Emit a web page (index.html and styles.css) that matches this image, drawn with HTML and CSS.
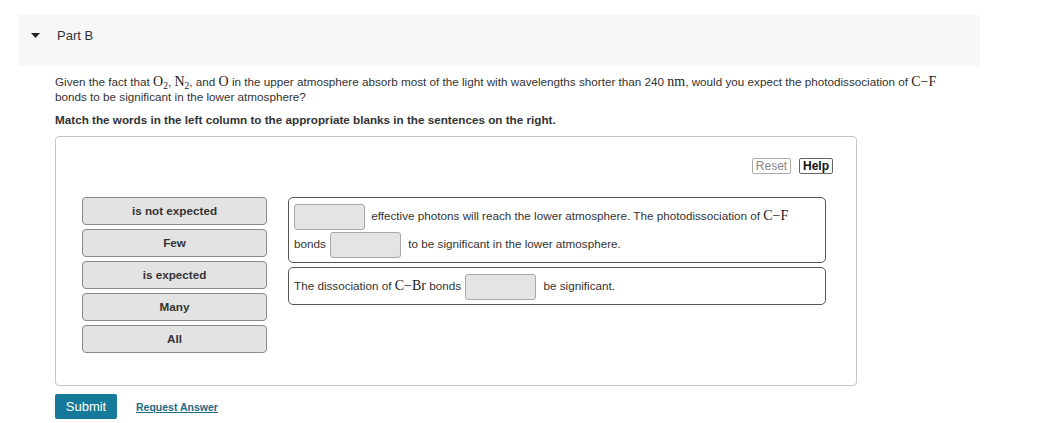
FILE: index.html
```html
<!DOCTYPE html>
<html lang="en">
<head>
<meta charset="utf-8">
<title>Part B</title>
<link rel="stylesheet" href="styles.css">
</head>
<body>
<div class="part-header">
  <svg class="caret" width="9" height="5" viewBox="0 0 9 5"><path d="M0 0 H9 L4.5 5 Z" fill="#222"/></svg>
  <span class="part-title">Part B</span>
</div>
<div class="content">
  <p class="question">Given the fact that <span class="m">O<sub>2</sub></span>, <span class="m">N<sub>2</sub></span>, and <span class="m">O</span> in the upper atmosphere absorb most of the light with wavelengths shorter than 240 <span class="m">nm</span>, would you expect the photodissociation of <span class="m">C−F</span> bonds to be significant in the lower atmosphere?</p>
  <p class="instructions">Match the words in the left column to the appropriate blanks in the sentences on the right.</p>
  <div class="match-box">
    <div class="toolbar">
      <button class="tool-btn reset">Reset</button>
      <button class="tool-btn help">Help</button>
    </div>
    <div class="match-area">
      <div class="word-col">
        <div class="word">is not expected</div>
        <div class="word">Few</div>
        <div class="word">is expected</div>
        <div class="word">Many</div>
        <div class="word">All</div>
      </div>
      <div class="sentence-col">
        <div class="sentence"><span class="blank first"></span> effective photons will reach the lower atmosphere. The photodissociation of <span class="m">C−F</span><br>bonds <span class="blank"></span> to be significant in the lower atmosphere.</div>
        <div class="sentence">The dissociation of <span class="m">C−Br</span> bonds <span class="blank"></span> be significant.</div>
      </div>
    </div>
  </div>
  <div class="actions">
    <button class="submit">Submit</button>
    <a class="request" href="#">Request Answer</a>
  </div>
</div>
</body>
</html>
```

FILE: styles.css
```css
body {
  margin: 0;
  font-family: "Liberation Sans", Arial, sans-serif;
  color: #333;
  background: #fff;
}

.part-header {
  box-sizing: border-box;
  margin: 15px 0 0 18px;
  width: 962px;
  height: 51px;
  background: #f7f7f7;
  display: flex;
  align-items: flex-start;
  padding: 12px 0 0 13px;
}

.caret {
  margin-top: 6px;
  margin-right: 17px;
}

.part-title {
  font-size: 13px;
  line-height: 17px;
  color: #333;
}

.content {
  margin-left: 55px;
}

.question {
  width: 905px;
  margin: 8px 0 0;
  font-size: 11.7px;
  line-height: 15px;
}

.m {
  font-family: "Liberation Serif", "Times New Roman", serif;
  font-size: 14px;
  line-height: 0;
  color: #222;
}

.m sub {
  font-size: 9.5px;
  line-height: 0;
  vertical-align: -3px;
}

.instructions {
  margin: 8px 0 0;
  font-size: 11.7px;
  line-height: 15px;
  font-weight: bold;
}

.match-box {
  box-sizing: border-box;
  width: 802px;
  margin-top: 9px;
  border: 1px solid #c6c6c6;
  border-radius: 4px;
  padding: 21px 23px 32px 26px;
}

.toolbar {
  display: flex;
  justify-content: flex-end;
  gap: 8px;
  height: 16px;
  margin-bottom: 23px;
}

.tool-btn {
  box-sizing: border-box;
  height: 16px;
  padding: 0 2px;
  font-family: "Liberation Sans", Arial, sans-serif;
  font-size: 12px;
  line-height: 14px;
  background: #fff;
  border-radius: 2px;
  cursor: pointer;
}

.reset {
  width: 39px;
  color: #888;
  border: 1px solid #aaa;
}

.help {
  width: 34px;
  color: #111;
  font-weight: bold;
  border: 1px solid #666;
}

.match-area {
  display: flex;
  gap: 21px;
  align-items: flex-start;
}

.word-col {
  width: 185px;
  display: flex;
  flex-direction: column;
  gap: 4px;
}

.word {
  box-sizing: border-box;
  height: 28px;
  line-height: 26px;
  text-align: center;
  font-size: 11.7px;
  font-weight: bold;
  color: #333;
  background: #e3e3e3;
  border: 1px solid #8a8a8a;
  border-radius: 4px;
}

.sentence-col {
  width: 538px;
  display: flex;
  flex-direction: column;
  gap: 4px;
}

.sentence {
  border: 1px solid #555;
  border-radius: 5px;
  padding: 4px 5px 4px;
  font-size: 11.7px;
  line-height: 27px;
  color: #333;
}

.blank {
  display: inline-block;
  box-sizing: border-box;
  width: 71px;
  height: 26px;
  vertical-align: middle;
  background: #e4e4e4;
  border: 1px solid #a8a8a8;
  border-radius: 3px;
  margin: 0 4px 0 1px;
}

.sentence .blank.first {
  margin-left: 0;
  margin-right: 3px;
}

.actions {
  display: flex;
  align-items: center;
  gap: 19px;
  margin-top: 8px;
}

.submit {
  box-sizing: border-box;
  width: 62px;
  height: 25px;
  border: none;
  border-radius: 2px;
  background: #157a99;
  color: #fff;
  font-family: "Liberation Sans", Arial, sans-serif;
  font-size: 13px;
  padding: 0;
  cursor: pointer;
}

.request {
  color: #1d6a86;
  font-size: 10.5px;
  font-weight: bold;
  text-decoration: underline;
}
```
